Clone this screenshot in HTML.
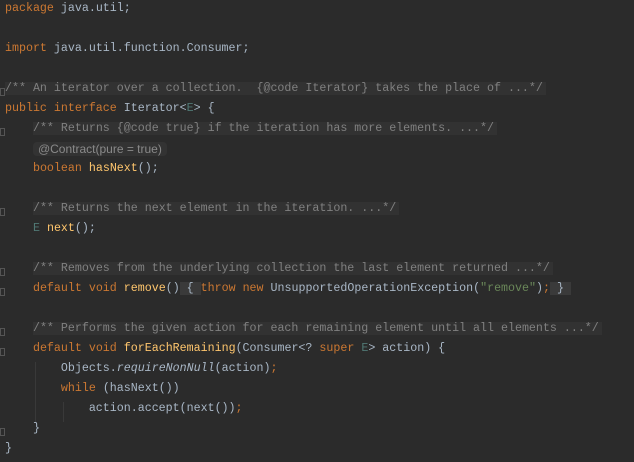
<html><head><style>
body{margin:0;background:#2b2b2b;width:634px;height:460px;overflow:hidden;position:relative}
.l{position:absolute;left:5px;height:20px;line-height:20px;font:11.65px "Liberation Mono",monospace;color:#a9b7c6;white-space:pre}
.k{color:#cc7832}.c{color:#808080}.m{color:#ffc66d}.s{color:#6a8759}.t{color:#507874}.i{font-style:italic}
.cb{background:#323232;padding-right:3px}
.h{background:#333;color:#8a8a8a;font:12px "Liberation Sans",sans-serif;border-radius:4px;padding:0 5px}
.g{position:absolute;left:0;width:5px;height:8px;border:1px solid #555;box-sizing:border-box}
.bk{background:#3a3a3a}
</style></head><body>
<div class="l" style="top:2px"><span class="k">package</span> java.util;</div>
<div class="l" style="top:42px"><span class="k">import</span> java.util.function.Consumer;</div>
<div class="l" style="top:82px"><span class="c cb">/** An iterator over a collection.  {@code Iterator} takes the place of ...*/</span></div>
<div class="l" style="top:102px"><span class="k">public interface</span> Iterator&lt;<span class="t">E</span>&gt; {</div>
<div class="l" style="top:122px">    <span class="c cb">/** Returns {@code true} if the iteration has more elements. ...*/</span></div>
<div class="l" style="top:142px">    <span class="h">@Contract(pure = true)</span></div>
<div class="l" style="top:162px">    <span class="k">boolean</span> <span class="m">hasNext</span>();</div>
<div class="l" style="top:202px">    <span class="c cb">/** Returns the next element in the iteration. ...*/</span></div>
<div class="l" style="top:222px">    <span class="t">E</span> <span class="m">next</span>();</div>
<div class="l" style="top:262px">    <span class="c cb">/** Removes from the underlying collection the last element returned ...*/</span></div>
<div class="l" style="top:282px">    <span class="k">default void</span> <span class="m">remove</span>()<span class="bk"> { </span><span class="k">throw new</span> UnsupportedOperationException(<span class="s">"remove"</span>)<span class="k">;</span><span class="bk"> } </span></div>
<div class="l" style="top:322px">    <span class="c cb">/** Performs the given action for each remaining element until all elements ...*/</span></div>
<div class="l" style="top:342px">    <span class="k">default void</span> <span class="m">forEachRemaining</span>(Consumer&lt;? <span class="k">super</span> <span class="t">E</span>&gt; action) {</div>
<div class="l" style="top:362px">        Objects.<span class="i">requireNonNull</span>(action)<span class="k">;</span></div>
<div class="l" style="top:382px">        <span class="k">while</span> (hasNext())</div>
<div class="l" style="top:402px">            action.accept(next())<span class="k">;</span></div>
<div class="l" style="top:422px">    }</div>
<div class="l" style="top:442px">}</div>
<div style="position:absolute;left:35px;top:362px;width:1px;height:60px;background:#393939"></div>
<div style="position:absolute;left:63px;top:402px;width:1px;height:20px;background:#393939"></div>
<div class="g" style="top:88px"></div><div class="g" style="top:128px"></div><div class="g" style="top:208px"></div>
<div class="g" style="top:268px"></div><div class="g" style="top:288px"></div><div class="g" style="top:328px"></div>
<div class="g" style="top:348px"></div><div class="g" style="top:428px"></div>
</body></html>
